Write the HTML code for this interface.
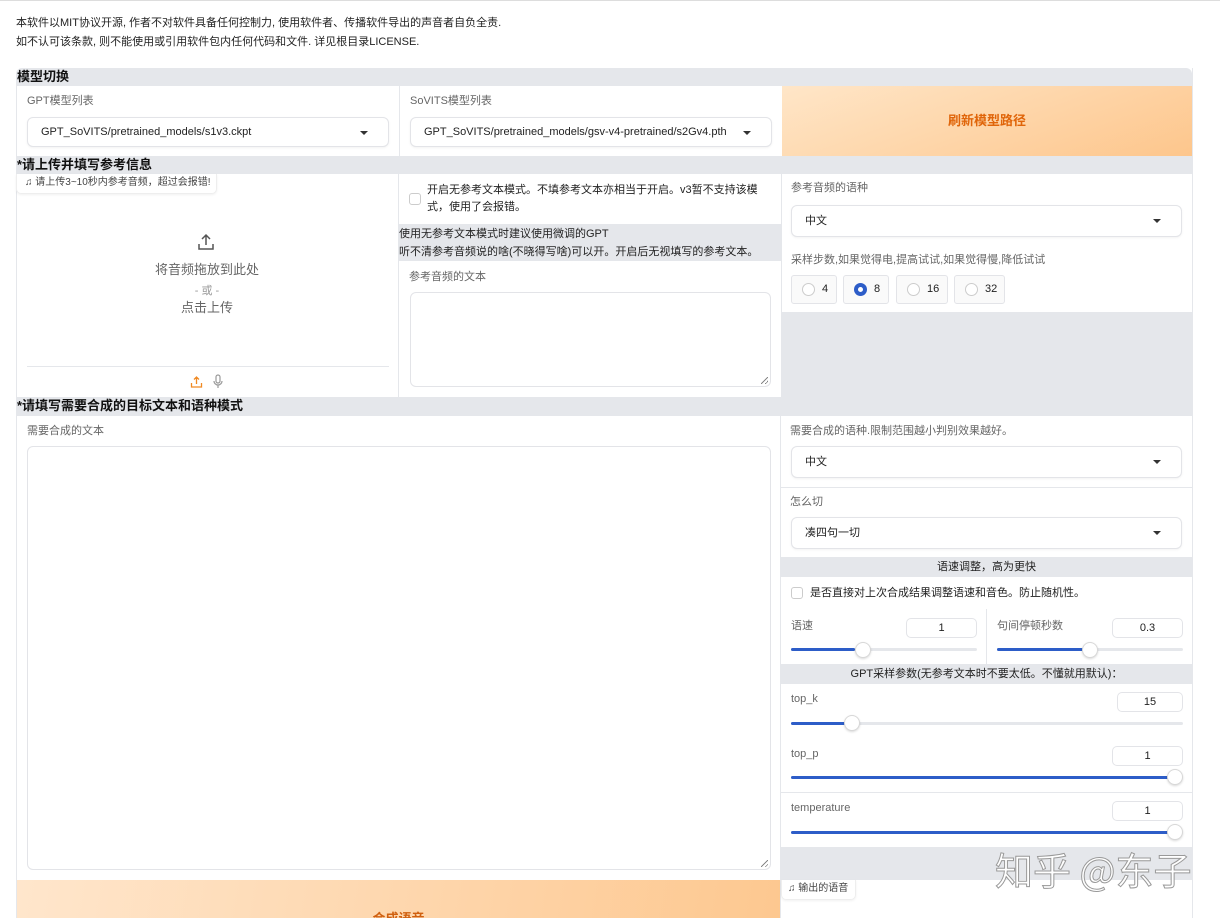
<!DOCTYPE html>
<html><head><meta charset="utf-8"><style>
*{box-sizing:border-box;margin:0;padding:0}
html,body{width:1220px;height:918px;overflow:hidden}
body{background:#fff;font-family:"Liberation Sans","Noto Sans CJK SC",sans-serif;color:#222;position:relative}
.a{position:absolute}
.t{font-size:11px;white-space:nowrap;line-height:14px}
.lbl{font-size:11px;color:#666;white-space:nowrap;line-height:14px;position:absolute}
.bar{position:absolute;background:#e5e7eb;font-weight:bold;font-size:13px;line-height:18px;padding-left:1px;color:#111}
.dd{position:absolute;border:1px solid #e3e4e8;border-radius:6px;background:#fff;box-shadow:0 1px 2px rgba(0,0,0,.05);font-size:11px;line-height:28px;padding-left:13px;color:#222}
.dd:after{content:"";position:absolute;right:20px;top:13px;border-left:4px solid transparent;border-right:4px solid transparent;border-top:4px solid #333}
.ta{position:absolute;border:1px solid #e3e4e8;border-radius:6px;background:#fff}
.ta:after{content:"";position:absolute;right:2px;bottom:2px;width:7px;height:7px;background:linear-gradient(135deg,transparent 45%,#888 45%,#888 55%,transparent 55%,transparent 75%,#888 75%,#888 85%,transparent 85%)}
.gray{position:absolute;background:#e5e7eb}
.num{position:absolute;border:1px solid #e3e4e8;border-radius:5px;font-size:11px;text-align:center;line-height:18px;background:#fff}
.tr{position:absolute;height:3px;background:#e5e7eb;border-radius:2px}
.fl{position:absolute;height:3px;background:#2d5dc8;border-radius:2px}
.th{position:absolute;width:16px;height:16px;border-radius:50%;background:#fff;border:1px solid #d8d8d8;box-shadow:0 1px 2px rgba(0,0,0,.15)}
.rd{position:absolute;border:1px solid #e3e4e8;border-radius:3px;background:#fafafa;font-size:11px;line-height:27px}
.rd i{position:absolute;left:10px;top:7px;width:13px;height:13px;border-radius:50%;border:1px solid #ccc;background:#fff}
.rd span{position:absolute;left:30px}
.cb{position:absolute;width:12px;height:12px;border:1px solid #ccc;border-radius:3px;background:#fff}
.vl{position:absolute;width:1px;background:#e5e7eb}
.hl{position:absolute;height:1px;background:#e5e7eb}
</style></head><body>
<div class="hl" style="left:0;top:0;width:1220px;background:#ddd"></div>
<div class="a t" style="left:16px;top:16px">本软件以MIT协议开源, 作者不对软件具备任何控制力, 使用软件者、传播软件导出的声音者自负全责.</div>
<div class="a t" style="left:16px;top:35px">如不认可该条款, 则不能使用或引用软件包内任何代码和文件. 详见根目录LICENSE.</div>

<div class="bar" style="left:16px;top:68px;width:1176px;height:18px;border-radius:6px 6px 0 0">模型切换</div>
<div class="vl" style="left:16px;top:86px;height:832px"></div>
<div class="lbl" style="left:27px;top:94px">GPT模型列表</div>
<div class="dd" style="left:27px;top:117px;width:362px;height:30px">GPT_SoVITS/pretrained_models/s1v3.ckpt</div>
<div class="vl" style="left:399px;top:86px;height:70px"></div>
<div class="lbl" style="left:410px;top:94px">SoVITS模型列表</div>
<div class="dd" style="left:410px;top:117px;width:362px;height:30px">GPT_SoVITS/pretrained_models/gsv-v4-pretrained/s2Gv4.pth</div>
<div class="a" style="left:782px;top:86px;width:410px;height:70px;background:linear-gradient(160deg,#ffe6c8,#fdc68c);color:#e0650a;font-weight:bold;font-size:13px;text-align:center;line-height:70px">刷新模型路径</div>

<div class="bar" style="left:16px;top:156px;width:1176px;height:18px">*请上传并填写参考信息</div>
<div class="a" style="left:16px;top:174px;width:201px;height:20px;border:1px solid #eee;border-top:none;border-radius:0 0 5px 5px;font-size:10px;color:#444;line-height:18px;padding-left:8px;box-shadow:0 1px 2px rgba(0,0,0,.06)">♫ 请上传3~10秒内参考音频，超过会报错!</div>
<svg class="a" style="left:197px;top:233px" width="18" height="18" viewBox="0 0 18 18" fill="none" stroke="#555" stroke-width="1.5"><path d="M9 12V2M5 6l4-4 4 4M2 11v5h14v-5"/></svg>
<div class="a" style="left:16px;top:261px;width:382px;text-align:center;font-size:13px;color:#666;line-height:18px">将音频拖放到此处</div>
<div class="a" style="left:16px;top:282px;width:382px;text-align:center;font-size:11px;color:#999">- 或 -</div>
<div class="a" style="left:16px;top:299px;width:382px;text-align:center;font-size:13px;color:#666;line-height:18px">点击上传</div>
<div class="hl" style="left:27px;top:366px;width:362px"></div>
<svg class="a" style="left:190px;top:375px" width="13" height="13" viewBox="0 0 13 13" fill="none" stroke="#f08a24" stroke-width="1.3"><path d="M6.5 9V2M4 4.5l2.5-2.5 2.5 2.5M1.5 8v4h10V8"/></svg>
<svg class="a" style="left:212px;top:374px" width="12" height="15" viewBox="0 0 12 15" fill="none" stroke="#999" stroke-width="1.2"><rect x="4" y="1" width="4" height="8" rx="2"/><path d="M2 7a4 4 0 008 0M6 11v3"/></svg>
<div class="vl" style="left:398px;top:174px;height:223px"></div>

<div class="cb" style="left:409px;top:193px"></div>
<div class="a t" style="left:427px;top:182px;font-size:11px;line-height:17px;white-space:normal;width:345px">开启无参考文本模式。不填参考文本亦相当于开启。v3暂不支持该模式，使用了会报错。</div>
<div class="gray" style="left:399px;top:224px;width:382px;height:37px"></div>
<div class="a t" style="left:399px;top:227px">使用无参考文本模式时建议使用微调的GPT</div>
<div class="a t" style="left:399px;top:245px">听不清参考音频说的啥(不晓得写啥)可以开。开启后无视填写的参考文本。</div>
<div class="lbl" style="left:409px;top:270px">参考音频的文本</div>
<div class="ta" style="left:410px;top:292px;width:361px;height:95px"></div>
<div class="vl" style="left:781px;top:174px;height:223px"></div>

<div class="lbl" style="left:791px;top:181px">参考音频的语种</div>
<div class="dd" style="left:791px;top:205px;width:391px;height:32px;line-height:30px">中文</div>
<div class="lbl" style="left:791px;top:253px">采样步数,如果觉得电,提高试试,如果觉得慢,降低试试</div>
<div class="rd" style="left:791px;top:275px;width:46px;height:29px"><i></i><span>4</span></div>
<div class="rd" style="left:843px;top:275px;width:46px;height:29px"><i style="border:4px solid #2d5dc8"></i><span>8</span></div>
<div class="rd" style="left:896px;top:275px;width:52px;height:29px"><i></i><span>16</span></div>
<div class="rd" style="left:954px;top:275px;width:51px;height:29px"><i></i><span>32</span></div>
<div class="gray" style="left:781px;top:312px;width:411px;height:85px"></div>

<div class="bar" style="left:16px;top:397px;width:1176px;height:19px">*请填写需要合成的目标文本和语种模式</div>
<div class="lbl" style="left:27px;top:424px">需要合成的文本</div>
<div class="ta" style="left:27px;top:446px;width:744px;height:424px"></div>
<div class="vl" style="left:780px;top:416px;height:502px"></div>
<div class="a" style="left:17px;top:880px;width:763px;height:38px;background:linear-gradient(100deg,#ffe6cc,#fdc890);text-align:center;color:#d06010;font-weight:bold;font-size:13px;line-height:78px">合成语音</div>

<div class="lbl" style="left:790px;top:424px">需要合成的语种.限制范围越小判别效果越好。</div>
<div class="dd" style="left:791px;top:446px;width:391px;height:32px;line-height:30px">中文</div>
<div class="hl" style="left:781px;top:487px;width:411px"></div>
<div class="lbl" style="left:790px;top:495px">怎么切</div>
<div class="dd" style="left:791px;top:517px;width:391px;height:32px;line-height:30px">凑四句一切</div>
<div class="gray" style="left:781px;top:557px;width:411px;height:20px;text-align:center;font-size:11px;line-height:20px;color:#222">语速调整，高为更快</div>
<div class="cb" style="left:791px;top:587px"></div>
<div class="a t" style="left:810px;top:586px">是否直接对上次合成结果调整语速和音色。防止随机性。</div>
<div class="lbl" style="left:791px;top:619px">语速</div>
<div class="num" style="left:906px;top:618px;width:71px;height:20px">1</div>
<div class="tr" style="left:791px;top:648px;width:186px"></div>
<div class="fl" style="left:791px;top:648px;width:64px"></div>
<div class="th" style="left:855px;top:642px"></div>
<div class="vl" style="left:986px;top:609px;height:55px"></div>
<div class="lbl" style="left:997px;top:619px">句间停顿秒数</div>
<div class="num" style="left:1112px;top:618px;width:71px;height:20px">0.3</div>
<div class="tr" style="left:997px;top:648px;width:186px"></div>
<div class="fl" style="left:997px;top:648px;width:86px"></div>
<div class="th" style="left:1082px;top:642px"></div>
<div class="gray" style="left:781px;top:664px;width:411px;height:20px;text-align:center;font-size:11px;line-height:20px;color:#222">GPT采样参数(无参考文本时不要太低。不懂就用默认)：</div>
<div class="lbl" style="left:791px;top:692px">top_k</div>
<div class="num" style="left:1117px;top:692px;width:66px;height:20px">15</div>
<div class="tr" style="left:791px;top:722px;width:392px"></div>
<div class="fl" style="left:791px;top:722px;width:54px"></div>
<div class="th" style="left:844px;top:715px"></div>
<div class="lbl" style="left:791px;top:747px">top_p</div>
<div class="num" style="left:1112px;top:746px;width:71px;height:20px">1</div>
<div class="tr" style="left:791px;top:776px;width:392px"></div>
<div class="fl" style="left:791px;top:776px;width:380px"></div>
<div class="th" style="left:1167px;top:769px"></div>
<div class="hl" style="left:781px;top:792px;width:411px"></div>
<div class="lbl" style="left:791px;top:801px">temperature</div>
<div class="num" style="left:1112px;top:801px;width:71px;height:20px">1</div>
<div class="tr" style="left:791px;top:831px;width:392px"></div>
<div class="fl" style="left:791px;top:831px;width:380px"></div>
<div class="th" style="left:1167px;top:824px"></div>
<div class="gray" style="left:781px;top:847px;width:411px;height:33px"></div>
<div class="a" style="left:781px;top:880px;width:75px;height:20px;border:1px solid #eee;border-top:none;border-radius:0 0 5px 5px;font-size:10px;color:#444;line-height:18px;padding-left:6px;box-shadow:0 1px 2px rgba(0,0,0,.06)">♫ 输出的语音</div>
<div class="vl" style="left:1192px;top:68px;height:850px"></div>
<div class="a" style="left:995px;top:846px;font-size:38px;line-height:46px;color:#fff;font-family:'Noto Sans CJK SC',sans-serif;-webkit-text-stroke:1px #999;white-space:nowrap">知乎 @东子</div>
</body></html>
